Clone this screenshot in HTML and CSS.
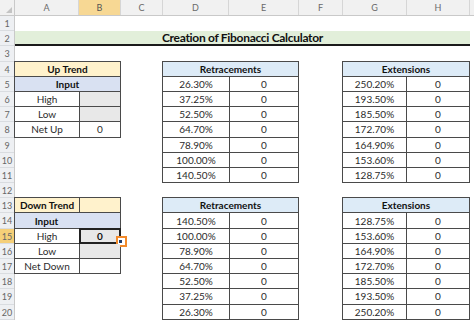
FILE: index.html
```html
<!DOCTYPE html>
<html lang="en">
<head>
    <meta charset="UTF-8">
    <title>Creation of Fibonacci Calculator</title>
    <link rel="stylesheet" href="styles.css">
</head>
<body>
    <div class="sheet">
        <div class="col-heads">
            <div class="corner"><span class="tri"></span></div>
            <div class="ch w-a">A</div>
            <div class="ch w-b active">B</div>
            <div class="ch w-c">C</div>
            <div class="ch w-d">D</div>
            <div class="ch w-e">E</div>
            <div class="ch w-f">F</div>
            <div class="ch w-g">G</div>
            <div class="ch w-h">H</div>
            <div class="ch w-i"></div>
        </div>
        <div class="body">
            <div class="row-heads">
                <div class="rh">1</div>
                <div class="rh">2</div>
                <div class="rh">3</div>
                <div class="rh">4</div>
                <div class="rh">5</div>
                <div class="rh">6</div>
                <div class="rh">7</div>
                <div class="rh">8</div>
                <div class="rh">9</div>
                <div class="rh">10</div>
                <div class="rh">11</div>
                <div class="rh">12</div>
                <div class="rh">13</div>
                <div class="rh">14</div>
                <div class="rh active">15</div>
                <div class="rh">16</div>
                <div class="rh">17</div>
                <div class="rh">18</div>
                <div class="rh">19</div>
                <div class="rh">20</div>
            </div>
            <div class="cells">
                <div class="title">Creation of Fibonacci Calculator</div>

                <!-- up trend -->
                <div class="box trend up">
                    <div class="c head-y span2">Up Trend</div>
                    <div class="c head-b span2">Input</div>
                    <div class="c">High</div>
                    <div class="c grey"></div>
                    <div class="c">Low</div>
                    <div class="c grey"></div>
                    <div class="c">Net Up</div>
                    <div class="c">0</div>
                </div>

                <!-- down trend -->
                <div class="box trend down">
                    <div class="c head-y">Down Trend</div>
                    <div class="c head-y"></div>
                    <div class="c head-b span2 left-a">Input</div>
                    <div class="c">High</div>
                    <div class="c grey bold selected">0<span class="handle"><i></i></span></div>
                    <div class="c">Low</div>
                    <div class="c grey"></div>
                    <div class="c">Net Down</div>
                    <div class="c"></div>
                </div>

                <div class="box levels ret-top">
                    <div class="c head-l span2">Retracements</div>
                    <div class="c">26.30%</div><div class="c">0</div>
                    <div class="c">37.25%</div><div class="c">0</div>
                    <div class="c">52.50%</div><div class="c">0</div>
                    <div class="c">64.70%</div><div class="c">0</div>
                    <div class="c">78.90%</div><div class="c">0</div>
                    <div class="c">100.00%</div><div class="c">0</div>
                    <div class="c">140.50%</div><div class="c">0</div>
                </div>

                <div class="box levels ext-top">
                    <div class="c head-l span2">Extensions</div>
                    <div class="c">250.20%</div><div class="c">0</div>
                    <div class="c">193.50%</div><div class="c">0</div>
                    <div class="c">185.50%</div><div class="c">0</div>
                    <div class="c">172.70%</div><div class="c">0</div>
                    <div class="c">164.90%</div><div class="c">0</div>
                    <div class="c">153.60%</div><div class="c">0</div>
                    <div class="c">128.75%</div><div class="c">0</div>
                </div>

                <div class="box levels ret-bottom">
                    <div class="c head-l span2">Retracements</div>
                    <div class="c">140.50%</div><div class="c">0</div>
                    <div class="c">100.00%</div><div class="c">0</div>
                    <div class="c">78.90%</div><div class="c">0</div>
                    <div class="c">64.70%</div><div class="c">0</div>
                    <div class="c">52.50%</div><div class="c">0</div>
                    <div class="c">37.25%</div><div class="c">0</div>
                    <div class="c">26.30%</div><div class="c">0</div>
                </div>

                <div class="box levels ext-bottom">
                    <div class="c head-l span2">Extensions</div>
                    <div class="c">128.75%</div><div class="c">0</div>
                    <div class="c">153.60%</div><div class="c">0</div>
                    <div class="c">164.90%</div><div class="c">0</div>
                    <div class="c">172.70%</div><div class="c">0</div>
                    <div class="c">185.50%</div><div class="c">0</div>
                    <div class="c">193.50%</div><div class="c">0</div>
                    <div class="c">250.20%</div><div class="c">0</div>
                </div>
            </div>
        </div>
    </div>
</body>
</html>
```

FILE: styles.css
```css
body {
    margin: 0;
    background: #fff;
    font-family: Lato, "Open Sans", sans-serif;
    color: #2b2b2b;
}
.sheet {
    width: 474px;
    height: 323px;
    overflow: hidden;
}
.col-heads {
    display: flex;
    height: 16px;
    background: #f1f1f1;
    border-bottom: 1px solid #c9c9c9;
    box-sizing: border-box;
}
.corner {
    width: 15px;
    border-right: 1px solid #c9c9c9;
    box-sizing: border-box;
    position: relative;
}
.tri {
    position: absolute;
    right: 2px;
    bottom: 2px;
    border-left: 6px solid transparent;
    border-bottom: 6px solid #c4c4c4;
}
.ch {
    font-size: 9px;
    color: #6a6a6a;
    text-align: center;
    line-height: 15px;
    border-right: 1px solid #d6d6d6;
    box-sizing: border-box;
}
.ch.active {
    background: #f7d894;
    color: #555;
}
.w-a { width: 64px; }
.w-b { width: 42px; }
.w-c { width: 42px; }
.w-d { width: 66px; }
.w-e { width: 70px; }
.w-f { width: 44px; }
.w-g { width: 64px; }
.w-h { width: 63px; }
.w-i { width: 4px; border-right: none; }

.body {
    display: flex;
}
.row-heads {
    width: 15px;
    display: grid;
    grid-template-rows: repeat(20, 15.2px);
    background: #eef0f3;
    border-right: 1px solid #c9c9c9;
    box-sizing: border-box;
}
.rh {
    font-size: 9px;
    color: #666;
    text-align: center;
    line-height: 15px;
    border-bottom: 1px solid #d9dce0;
}
.rh.active {
    background: #f5cf78;
}

.cells {
    display: grid;
    grid-template-columns: 64px 42px 42px 66px 70px 44px 64px 63px 4px;
    grid-template-rows: repeat(20, 15.2px);
}
.title {
    grid-column: 1 / 9;
    grid-row: 2;
    background: #e2efda;
    border-bottom: 2px solid #1a1a1a;
    font-weight: 700;
    font-size: 12px;
    letter-spacing: -0.3px;
    text-align: center;
    line-height: 14px;
    color: #111;
}

.box {
    display: grid;
    gap: 1px;
    background: #4a4a4a;
    border: 1px solid #4a4a4a;
    margin: -1px 0 0 -1px;
}
.trend {
    grid-column: 1 / 3;
    grid-template-columns: 64px 1fr;
    grid-template-rows: repeat(5, 1fr);
}
.up { grid-row: 4 / 9; }
.down { grid-row: 13 / 18; }
.levels {
    grid-template-columns: 66px 1fr;
    grid-template-rows: repeat(8, 1fr);
}
.ret-top { grid-column: 4 / 6; grid-row: 4 / 12; }
.ext-top { grid-column: 7 / 9; grid-row: 4 / 12; }
.ret-bottom { grid-column: 4 / 6; grid-row: 13 / 21; }
.ext-bottom { grid-column: 7 / 9; grid-row: 13 / 21; }
.ext-top, .ext-bottom { grid-template-columns: 63px 1fr; }

.c {
    background: #fff;
    font-size: 10px;
    text-align: center;
    display: flex;
    align-items: center;
    justify-content: center;
    position: relative;
}
.span2 { grid-column: span 2; }
.head-y { background: #fff2cc; font-weight: 700; color: #111; }
.head-b { background: #d9e1f2; font-weight: 700; color: #111; }
.head-l { background: #ddebf7; font-weight: 700; color: #111; }
.left-a { padding-right: 42px; }
.grey { background: #e8e8e8; }
.bold { font-weight: 700; color: #111; }
.selected {
    outline: 2px solid #222;
    outline-offset: -1px;
}
.handle {
    position: absolute;
    right: -7px;
    bottom: -4px;
    width: 7px;
    height: 7px;
    border: 2px solid #f28a2b;
    background: #fff;
    display: flex;
    align-items: center;
    justify-content: center;
}
.handle i {
    width: 3px;
    height: 3px;
    margin-right: 2px;
    background: #1f3d6b;
}
```
